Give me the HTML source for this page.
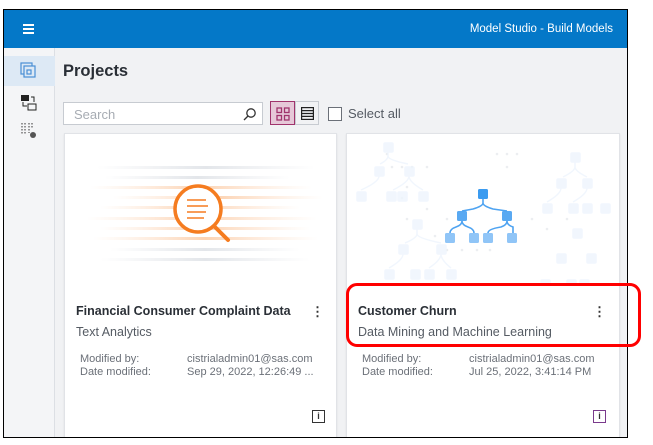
<!DOCTYPE html>
<html><head><style>
*{margin:0;padding:0;box-sizing:border-box}
body{width:653px;height:445px;background:#fff;position:relative;overflow:hidden;font-family:"Liberation Sans",sans-serif}
.frame{position:absolute;left:3px;top:9px;width:625px;height:429px;border:1px solid #000;background:#f1f2f4;overflow:hidden}
.hdr{position:absolute;left:0;top:0;width:100%;height:38px;background:#0478c8}
.side{position:absolute;left:0;top:38px;width:51px;height:400px;background:#f4f5f7;border-right:1px solid #dcdfe4}
.abs{position:absolute}
.card{position:absolute;background:#fff;border:1px solid #e1e3e7;box-shadow:0 1px 2px rgba(0,0,0,.08)}
.t1{font-size:12.5px;font-weight:bold;color:#2a2f36}
.t2{font-size:12.5px;color:#555b63}
.meta{font-size:11px;color:#6b7078;line-height:13px}
</style></head><body>
<div class="frame">
 <div class="hdr">
  <div class="abs" style="left:19px;top:14px;width:11px;height:2px;background:#fff;box-shadow:0 4px 0 #fff,0 8px 0 #fff"></div>
  <div class="abs" style="right:14px;top:13px;color:#fff;font-size:11.5px">Model Studio - Build Models</div>
 </div>
 <div class="side">
  <div class="abs" style="left:0;top:8px;width:51px;height:30px;background:#dde9f5"></div>
  <svg class="abs" style="left:16px;top:14px" width="18" height="18" viewBox="0 0 18 18" fill="none" stroke="#4a8fd4" stroke-width="1.2"><rect x="1" y="1" width="11" height="11"/><rect x="4" y="4" width="11" height="11" fill="#dde9f5"/><rect x="7" y="8" width="4" height="4"/></svg>
  <svg class="abs" style="left:16px;top:46px" width="18" height="18" viewBox="0 0 18 18"><rect x="1" y="1" width="8" height="6" fill="#222"/><rect x="8" y="10" width="8" height="6" fill="none" stroke="#222"/><path d="M3 8v4h4M11 3h3v5" fill="none" stroke="#222"/></svg>
  <svg class="abs" style="left:16px;top:74px" width="18" height="18" viewBox="0 0 18 18" stroke="#333" stroke-dasharray="1.5 1.5"><path d="M2 1v12M5 1v12M9 1v10M12 1v6"/><circle cx="13" cy="13" r="3" fill="#555" stroke="none"/></svg>
 </div>
 <div class="abs" style="left:59px;top:52px;font-size:16.5px;font-weight:bold;color:#2a2f36">Projects</div>
 <div class="abs" style="left:59px;top:92px;width:200px;height:23px;background:#fff;border:1px solid #c7cbd1">
  <span class="abs" style="left:10px;top:4px;font-size:13px;color:#a7acb3">Search</span>
  <svg class="abs" style="right:5px;top:4px" width="14" height="14" viewBox="0 0 14 14" fill="none" stroke="#333" stroke-width="1.3"><circle cx="8" cy="6" r="4.2"/><path d="M5 9l-4 4"/></svg>
 </div>
 <div class="abs" style="left:266px;top:91px;width:25px;height:24px;background:#e6c8d8;border:1px solid #a0336c">
  <svg class="abs" style="left:5px;top:5px" width="14" height="14" viewBox="0 0 14 14" fill="none" stroke="#a0336c" stroke-width="1.3"><rect x="1" y="1" width="4.5" height="4.5"/><rect x="8.5" y="1" width="4.5" height="4.5"/><rect x="1" y="8.5" width="4.5" height="4.5"/><rect x="8.5" y="8.5" width="4.5" height="4.5"/></svg>
 </div>
 <div class="abs" style="left:291px;top:91px;width:24px;height:24px;background:#f1f2f4;border:1px solid #c7cbd1">
  <svg class="abs" style="left:5px;top:5px" width="13" height="13" viewBox="0 0 13 13" fill="none" stroke="#222" stroke-width="1.2"><rect x=".6" y=".6" width="11.8" height="11.8"/><path d="M1 3.6h11M1 6.5h11M1 9.4h11"/></svg>
 </div>
 <div class="abs" style="left:324px;top:97px;width:14px;height:14px;background:#fff;border:1px solid #6b7078"></div>
 <div class="abs" style="left:344px;top:96px;font-size:13px;color:#555b63">Select all</div>

 <div class="card" style="left:60px;top:123px;width:273px;height:320px">
  <svg class="abs" style="left:0;top:0" width="273" height="150">
   <defs><linearGradient id="g" x1="0" x2="1"><stop offset="0" stop-color="#fde3cf" stop-opacity="0"/><stop offset=".5" stop-color="#fcd3b3"/><stop offset="1" stop-color="#fde3cf" stop-opacity="0"/></linearGradient>
   <linearGradient id="h" x1="0" x2="1"><stop offset="0" stop-color="#e6e8ec" stop-opacity="0"/><stop offset=".5" stop-color="#e3e6ea"/><stop offset="1" stop-color="#e6e8ec" stop-opacity="0"/></linearGradient></defs>
   <rect x="32" y="32" width="218" height="3" fill="url(#h)"/><rect x="40" y="42" width="185" height="3" fill="url(#h)"/><rect x="25" y="52" width="222" height="3" fill="url(#g)"/><rect x="48" y="62" width="210" height="3" fill="url(#g)"/><rect x="35" y="72" width="200" height="3" fill="url(#g)"/><rect x="22" y="83" width="230" height="3" fill="url(#g)"/><rect x="35" y="93" width="210" height="3" fill="url(#g)"/><rect x="28" y="103" width="225" height="3" fill="url(#g)"/><rect x="45" y="114" width="190" height="3" fill="url(#h)"/><rect x="35" y="124" width="210" height="3" fill="url(#h)"/>
   <circle cx="133" cy="75" r="23" fill="#fff" stroke="#f57c20" stroke-width="3.5"/>
   <path d="M149 92l14 14" stroke="#f57c20" stroke-width="4" stroke-linecap="round"/>
   <path d="M124 68h19M124 74h21M124 80h19M124 86h17" stroke="#f57c20" stroke-width="1.6" transform="translate(-2,-2)"/>
  </svg>
  <div class="abs t1" style="left:11px;top:170px">Financial Consumer Complaint Data</div>
  <div class="abs" style="left:246px;top:170px;font-size:13px;color:#333;font-weight:bold">&#8942;</div>
  <div class="abs t2" style="left:11px;top:191px">Text Analytics</div>
  <div class="abs meta" style="left:15px;top:219px">Modified by:<br>Date modified:</div>
  <div class="abs meta" style="left:122px;top:219px">cistrialadmin01@sas.com<br>Sep 29, 2022, 12:26:49 ...</div>
  <div class="abs" style="left:247px;top:276px;width:13px;height:13px;border:1px solid #333;font-size:9px;text-align:center;line-height:11px;font-weight:bold;color:#333">i</div>
 </div>

 <div class="card" style="left:342px;top:123px;width:274px;height:320px">
  <svg class="abs" style="left:0;top:0" width="274" height="150">
   <g fill="#eceef1"><circle cx="45" cy="33" r="1.3"/><circle cx="55" cy="33" r="1.3"/><circle cx="65" cy="33" r="1.3"/><circle cx="40" cy="20" r="1.3"/><circle cx="60" cy="53" r="1.3"/><circle cx="80" cy="33" r="1.3"/><circle cx="55" cy="64" r="1.3"/><circle cx="80" cy="75" r="1.3"/><circle cx="100" cy="85" r="1.3"/><circle cx="60" cy="85" r="1.3"/><circle cx="88" cy="102" r="1.3"/><circle cx="100" cy="116" r="1.3"/><circle cx="115" cy="116" r="1.3"/><circle cx="125" cy="102" r="1.3"/><circle cx="130" cy="116" r="1.3"/><circle cx="143" cy="116" r="1.3"/><circle cx="150" cy="20" r="1.3"/><circle cx="160" cy="20" r="1.3"/><circle cx="170" cy="20" r="1.3"/><circle cx="160" cy="33" r="1.3"/><circle cx="185" cy="85" r="1.3"/><circle cx="200" cy="95" r="1.3"/><circle cx="220" cy="85" r="1.3"/></g>
   <g fill="#eef5fd" stroke="#eef5fd" stroke-width="1.5" opacity=".8">
    <rect x="37" y="9" width="9" height="9" rx="1"/><rect x="28" y="33" width="9" height="9" rx="1"/><rect x="58" y="33" width="9" height="9" rx="1"/><rect x="10" y="58" width="9" height="9" rx="1"/><rect x="40" y="58" width="9" height="9" rx="1"/><rect x="51" y="58" width="9" height="9" rx="1"/><rect x="72" y="58" width="9" height="9" rx="1"/>
    <rect x="224" y="19" width="9" height="9" rx="1"/><rect x="210" y="45" width="9" height="9" rx="1"/><rect x="236" y="45" width="9" height="9" rx="1"/><rect x="196" y="70" width="9" height="9" rx="1"/><rect x="222" y="70" width="9" height="9" rx="1"/><rect x="236" y="70" width="9" height="9" rx="1"/><rect x="254" y="70" width="9" height="9" rx="1"/>
    <rect x="66" y="86" width="9" height="9" rx="1"/><rect x="52" y="111" width="9" height="9" rx="1"/><rect x="90" y="111" width="9" height="9" rx="1"/><rect x="38" y="136" width="9" height="9" rx="1"/><rect x="64" y="136" width="9" height="9" rx="1"/><rect x="78" y="136" width="9" height="9" rx="1"/><rect x="100" y="136" width="9" height="9" rx="1"/>
    <rect x="226" y="95" width="9" height="9" rx="1"/><rect x="210" y="120" width="9" height="9" rx="1"/><rect x="240" y="120" width="9" height="9" rx="1"/><rect x="194" y="146" width="9" height="9" rx="1"/><rect x="220" y="146" width="9" height="9" rx="1"/><rect x="233" y="146" width="9" height="9" rx="1"/>
    <path d="M41 18v4q0 4-8 8M41 22q0 4 20 8M32 42q0 6-18 14M62 42q0 6-16 14M62 42q0 6 14 14" fill="none"/>
    <path d="M228 28v5q0 4-12 10M228 33q0 4 12 10M214 54q0 6-14 14M240 54q0 6-14 14" fill="none"/>
    <path d="M70 95v5q0 4-12 9M70 100q0 4 24 9M56 120q0 6-14 14M94 120q0 6-12 14M94 120q0 6 10 14" fill="none"/>
   </g>
   <g fill="#3b9bf0"><rect x="131" y="55" width="10" height="10" rx="1.5"/></g>
   <g fill="#59a9f2"><rect x="110" y="77" width="10" height="10" rx="1.5"/><rect x="155" y="77" width="10" height="10" rx="1.5"/></g>
   <g fill="#90c5f7"><rect x="98" y="99" width="10" height="10" rx="1.5"/><rect x="122" y="99" width="10" height="10" rx="1.5"/><rect x="136" y="99" width="10" height="10" rx="1.5"/><rect x="160" y="99" width="10" height="10" rx="1.5"/></g>
   <path d="M136 65v4q0 3-10 6q-11 2-11 2M136 69q0 3 10 6q14 2 14 2M115 87q0 4-6 6q-6 2-6 6M115 87q0 4 6 6q6 2 6 6M160 87q0 4-6 6q-13 2-13 6M160 87q0 4 6 6q0 2 0 6" fill="none" stroke="#4ea3f1" stroke-width="1.6"/>
  </svg>
  <div class="abs t1" style="left:11px;top:170px">Customer Churn</div>
  <div class="abs" style="left:246px;top:170px;font-size:13px;color:#333;font-weight:bold">&#8942;</div>
  <div class="abs t2" style="left:11px;top:191px">Data Mining and Machine Learning</div>
  <div class="abs meta" style="left:15px;top:219px">Modified by:<br>Date modified:</div>
  <div class="abs meta" style="left:122px;top:219px">cistrialadmin01@sas.com<br>Jul 25, 2022, 3:41:14 PM</div>
  <div class="abs" style="left:246px;top:276px;width:13px;height:13px;border:1px solid #7a3a8c;font-size:9px;text-align:center;line-height:11px;font-weight:bold;color:#333">i</div>
 </div>
</div>
<div class="abs" style="left:346px;top:283px;width:295px;height:64px;border:3px solid #f00;border-radius:11px"></div>
</body></html>
